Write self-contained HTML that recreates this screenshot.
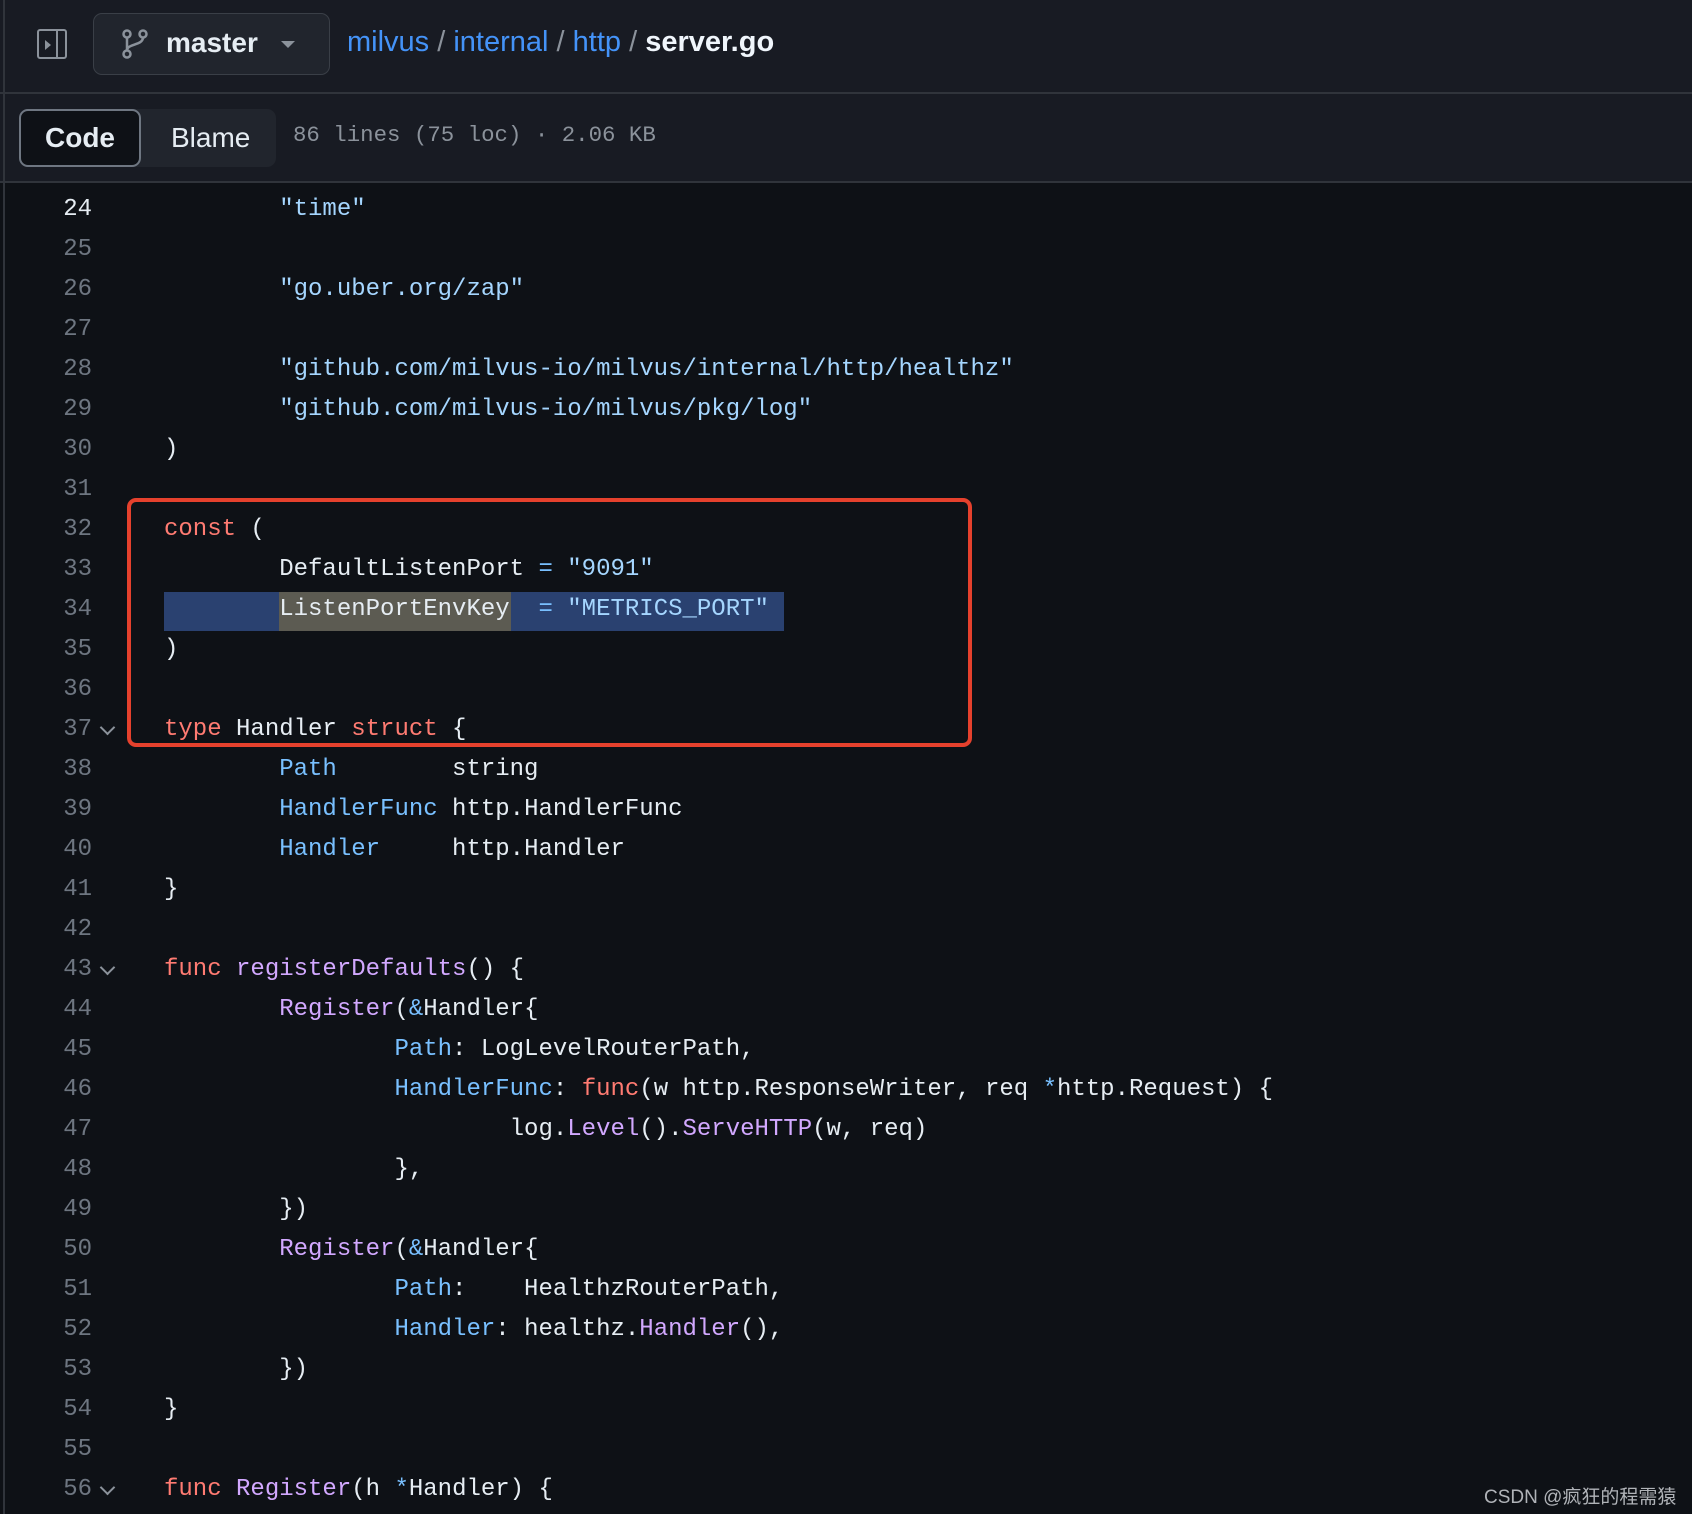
<!DOCTYPE html>
<html><head><meta charset="utf-8"><style>
*{margin:0;padding:0;box-sizing:border-box}
body{width:1692px;height:1514px;background:#0e1116;overflow:hidden;position:relative;font-family:"Liberation Sans",sans-serif;color:#e6edf3}
.hdr{position:absolute;left:0;top:0;width:1692px;height:183px;background:#181b23}
.b1{position:absolute;left:0;top:92px;width:1692px;height:2px;background:#30343b}
.b2{position:absolute;left:0;top:181px;width:1692px;height:2px;background:#30343b}
.lb{position:absolute;left:3px;top:0;width:2px;height:1514px;background:#30343b}
.side{position:absolute;left:37px;top:29px;width:30px;height:30px;border:2.5px solid #8b929b;border-radius:3px}
.side:after{content:"";position:absolute;right:7px;top:0;width:2.5px;height:100%;background:#8b929b}
.side:before{content:"";position:absolute;left:6px;top:9px;border-left:6px solid #8b929b;border-top:5px solid transparent;border-bottom:5px solid transparent}
.br{position:absolute;left:93px;top:13px;width:237px;height:62px;border:1.5px solid #3a3f47;border-radius:9px;background:#21252d}
.br .t{position:absolute;left:72px;top:13px;font-size:28px;font-weight:bold;color:#e6edf3}
.caret{position:absolute;left:187px;top:27px;border-top:7px solid #8b929b;border-left:7px solid transparent;border-right:7px solid transparent}
.crumb{position:absolute;left:347px;top:26px;font-size:29px;color:#8b929b}
.crumb a{color:#4493f8;text-decoration:none}
.crumb b{color:#f0f6fc}
.tabs{position:absolute;left:19px;top:109px;width:257px;height:58px;background:#21252d;border-radius:9px}
.code{position:absolute;left:0;top:0;width:122px;height:58px;border:2px solid #6e7681;border-radius:9px;background:#0e1116;font-size:28px;font-weight:bold;text-align:center;line-height:54px}
.blame{position:absolute;left:152px;top:0;line-height:58px;font-size:28px;color:#e6edf3}
.meta{position:absolute;left:293px;top:122px;font-family:"Liberation Mono",monospace;font-size:22.4px;color:#8b929b}
.lines{position:absolute;left:0;top:190px;font-family:"Liberation Mono",monospace;font-size:24px}
.l{height:40px;line-height:40px;position:relative;white-space:pre}
.n{position:absolute;left:0;width:92px;text-align:right;color:#6e7681}
.c{position:absolute;left:164px}
.ch{position:absolute;left:102px;top:12px;width:11px;height:11px;border-right:2px solid #8b929b;border-bottom:2px solid #8b929b;transform:rotate(45deg)}
.s{color:#a5d6ff}.k{color:#ff7b72}.f{color:#d2a8ff}.v{color:#79c0ff}
.hl{position:absolute;left:164px;top:592px;width:620px;height:39px;background:#2a4170}
.hl2{position:absolute;left:279px;top:592px;width:232px;height:39px;background:#5c5b52}
.box{position:absolute;left:127px;top:498px;width:845px;height:249px;border:4px solid #e5412d;border-radius:9px}
.wm{position:absolute;left:1484px;top:1482px;font-family:"Liberation Sans","Noto Sans CJK SC",sans-serif;font-size:19px;color:#b0b3b8}
</style></head><body>
<div class="hdr"></div><div class="b1"></div><div class="b2"></div>
<div class="side"></div>
<div class="br">
<svg style="position:absolute;left:26px;top:14px" width="30" height="32" viewBox="0 0 30 32" fill="none" stroke="#8b929b" stroke-width="2.5"><circle cx="7" cy="6" r="3.5"/><circle cx="7" cy="26" r="3.5"/><circle cx="23" cy="6" r="3.5"/><path d="M7 9.5v13M23 9.5c0 8-16 6-16 13"/></svg>
<span class="t">master</span><div class="caret"></div></div>
<div class="crumb"><a>milvus</a> / <a style="font-weight:normal">internal</a> / <a>http</a> / <b>server.go</b></div>
<div class="tabs"><div class="code">Code</div><div class="blame">Blame</div></div>
<div class="meta">86 lines (75 loc) · 2.06 KB</div>
<div class="hl"></div><div class="hl2"></div>
<div class="lines">
<div class="l"><span class="n" style="color:#e6edf3">24</span><span class="c">        <span class="s">"time"</span></span></div>
<div class="l"><span class="n">25</span></div>
<div class="l"><span class="n">26</span><span class="c">        <span class="s">"go.uber.org/zap"</span></span></div>
<div class="l"><span class="n">27</span></div>
<div class="l"><span class="n">28</span><span class="c">        <span class="s">"github.com/milvus-io/milvus/internal/http/healthz"</span></span></div>
<div class="l"><span class="n">29</span><span class="c">        <span class="s">"github.com/milvus-io/milvus/pkg/log"</span></span></div>
<div class="l"><span class="n">30</span><span class="c">)</span></div>
<div class="l"><span class="n">31</span></div>
<div class="l"><span class="n">32</span><span class="c"><span class="k">const</span> (</span></div>
<div class="l"><span class="n">33</span><span class="c">        DefaultListenPort <span class="v">=</span> <span class="s">"9091"</span></span></div>
<div class="l"><span class="n">34</span><span class="c">        ListenPortEnvKey  <span class="v">=</span> <span class="s">"METRICS_PORT"</span></span></div>
<div class="l"><span class="n">35</span><span class="c">)</span></div>
<div class="l"><span class="n">36</span></div>
<div class="l"><span class="n">37</span><span class="ch"></span><span class="c"><span class="k">type</span> Handler <span class="k">struct</span> {</span></div>
<div class="l"><span class="n">38</span><span class="c">        <span class="v">Path</span>        string</span></div>
<div class="l"><span class="n">39</span><span class="c">        <span class="v">HandlerFunc</span> http.HandlerFunc</span></div>
<div class="l"><span class="n">40</span><span class="c">        <span class="v">Handler</span>     http.Handler</span></div>
<div class="l"><span class="n">41</span><span class="c">}</span></div>
<div class="l"><span class="n">42</span></div>
<div class="l"><span class="n">43</span><span class="ch"></span><span class="c"><span class="k">func</span> <span class="f">registerDefaults</span>() {</span></div>
<div class="l"><span class="n">44</span><span class="c">        <span class="f">Register</span>(<span class="v">&amp;</span>Handler{</span></div>
<div class="l"><span class="n">45</span><span class="c">                <span class="v">Path</span>: LogLevelRouterPath,</span></div>
<div class="l"><span class="n">46</span><span class="c">                <span class="v">HandlerFunc</span>: <span class="k">func</span>(w http.ResponseWriter, req <span class="v">*</span>http.Request) {</span></div>
<div class="l"><span class="n">47</span><span class="c">                        log.<span class="f">Level</span>().<span class="f">ServeHTTP</span>(w, req)</span></div>
<div class="l"><span class="n">48</span><span class="c">                },</span></div>
<div class="l"><span class="n">49</span><span class="c">        })</span></div>
<div class="l"><span class="n">50</span><span class="c">        <span class="f">Register</span>(<span class="v">&amp;</span>Handler{</span></div>
<div class="l"><span class="n">51</span><span class="c">                <span class="v">Path</span>:    HealthzRouterPath,</span></div>
<div class="l"><span class="n">52</span><span class="c">                <span class="v">Handler</span>: healthz.<span class="f">Handler</span>(),</span></div>
<div class="l"><span class="n">53</span><span class="c">        })</span></div>
<div class="l"><span class="n">54</span><span class="c">}</span></div>
<div class="l"><span class="n">55</span></div>
<div class="l"><span class="n">56</span><span class="ch"></span><span class="c"><span class="k">func</span> <span class="f">Register</span>(h <span class="v">*</span>Handler) {</span></div>
</div>
<div class="box"></div>
<div class="lb"></div>
<div class="wm">CSDN @疯狂的程需猿</div>
</body></html>
